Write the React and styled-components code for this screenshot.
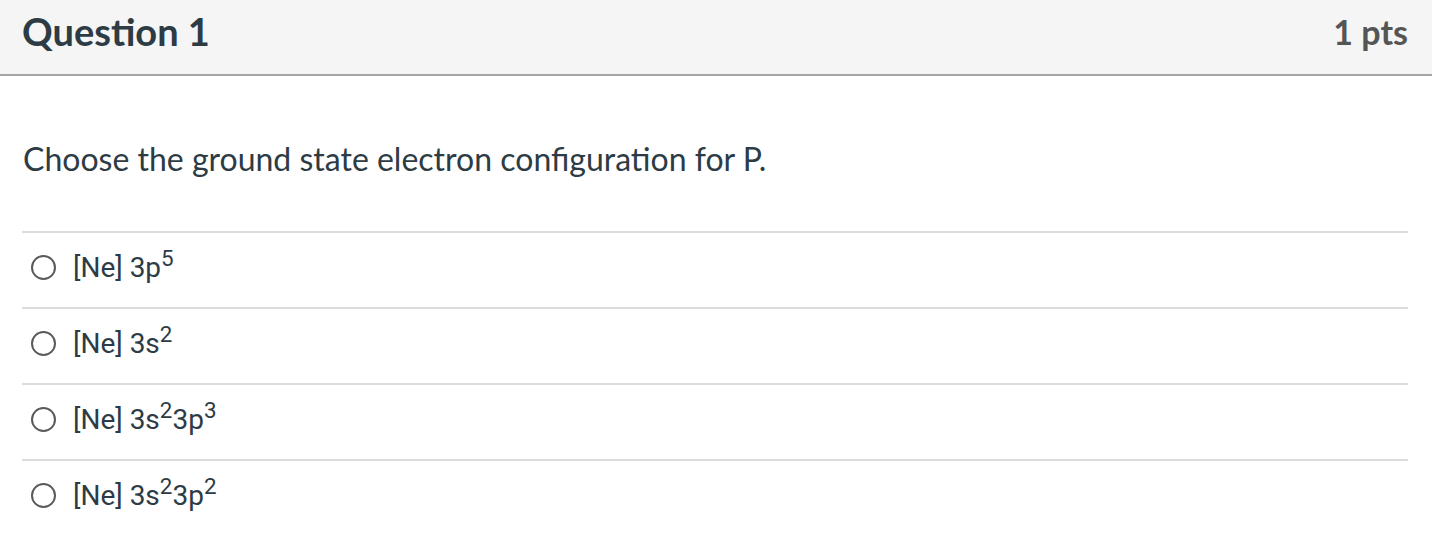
import styled, { createGlobalStyle } from "styled-components";

const GlobalStyle = createGlobalStyle`
  body {
    margin: 0;
    background: #fff;
    font-family: Lato, "Noto Sans", sans-serif;
    color: #2d3b45;
  }
`;

const answers = [
  { id: "a", parts: [["3p", "5"]] },
  { id: "b", parts: [["3s", "2"]] },
  { id: "c", parts: [["3s", "2"], ["3p", "3"]] },
  { id: "d", parts: [["3s", "2"], ["3p", "2"]] },
];

const App = () => {
  return (
    <>
      <GlobalStyle />
      <Question>
        <Header>
          <Title>Question 1</Title>
          <Points>1 pts</Points>
        </Header>
        <Body>
          <Prompt>Choose the ground state electron configuration for P.</Prompt>
          <Answers>
            {answers.map((a) => (
              <Row key={a.id}>
                <Radio type="radio" name="q1" />
                <Label>
                  [Ne]{" "}
                  {a.parts.map(([base, exp], i) => (
                    <span key={i}>
                      {base}
                      <sup>{exp}</sup>
                    </span>
                  ))}
                </Label>
              </Row>
            ))}
          </Answers>
        </Body>
      </Question>
    </>
  );
};

const Question = styled.div`
  width: 1432px;
`;

const Header = styled.div`
  box-sizing: border-box;
  display: flex;
  align-items: center;
  justify-content: space-between;
  padding: 0 24px 0 22px;
  background: #f5f5f5;
  border-bottom: 2px solid #a5a5a5;
  height: 76px;
`;

const Title = styled.h2`
  margin: 0;
  font-size: 38px;
  font-weight: 700;
  color: #2d3b45;
  position: relative;
  top: -6px;
`;

const Points = styled.div`
  font-size: 34px;
  font-weight: 700;
  color: #555;
  position: relative;
  top: -6px;
`;

const Body = styled.div`
  padding: 0 24px 0 22px;
`;

const Prompt = styled.p`
  margin: 0;
  padding: 62px 0 51px 1px;
  font-size: 32px;
  line-height: 42px;
  color: #2d3b45;
`;

const Answers = styled.div`
  display: flex;
  flex-direction: column;
`;

const Row = styled.label`
  height: 76px;
  box-sizing: border-box;
  border-top: 2px solid #dcdcdc;
  display: flex;
  align-items: center;
  gap: 17px;
  padding-left: 9px;
  padding-bottom: 5px;
`;

const Radio = styled.input`
  appearance: none;
  margin: 0;
  width: 25px;
  height: 25px;
  border: 2px solid #5a5a5a;
  border-radius: 50%;
  box-sizing: border-box;
  background: #fff;
`;

const Label = styled.span`
  font-family: Roboto, "Liberation Sans", sans-serif;
  font-size: 28px;
  color: #2d3b45;
  sup {
    font-size: 0.8em;
    line-height: 0;
    vertical-align: 0.48em;
  }
`;

export default App;
